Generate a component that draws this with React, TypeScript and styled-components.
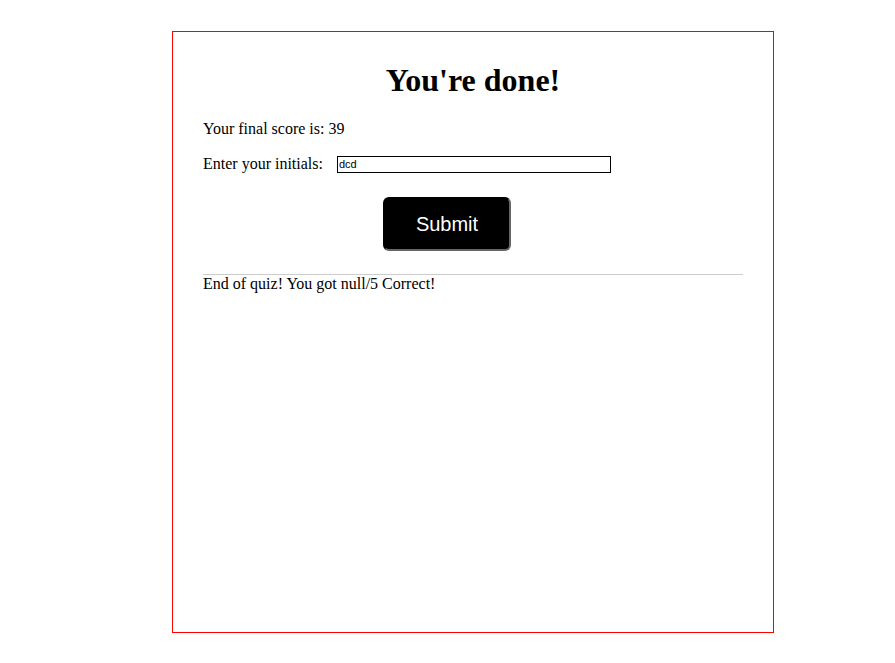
import React from "react";
import styled, { createGlobalStyle } from "styled-components";

const Global = createGlobalStyle`
  body {
    margin: 8px;
    font-family: "Liberation Serif", "Times New Roman", serif;
    font-size: 16px;
    color: #000;
    background: #fff;
  }
`;

const Card = styled.div`
  width: 540px;
  height: 581px;
  margin: 23px 0 0 164px;
  padding: 9px 30px 10px;
  border: 1px solid red;
`;

const Title = styled.h1`
  font-size: 32px;
  font-weight: bold;
  text-align: center;
  margin: 21px 0;
`;

const Line = styled.p`
  margin: 17px 0 16px;
  display: flex;
  align-items: center;
`;

const Label = styled.label`
  margin-right: 14px;
`;

const Input = styled.input`
  box-sizing: border-box;
  width: 274px;
  height: 17px;
  border: 1px solid #000;
  padding: 0 1px;
  font-family: "Liberation Sans", Arial, sans-serif;
  font-size: 11px;
  color: #000;
  outline: none;
`;

const ButtonRow = styled.div`
  display: flex;
  padding-left: 180px;
  margin-top: 24px;
`;

const SubmitButton = styled.button`
  box-sizing: border-box;
  width: 128px;
  height: 54px;
  background: #000;
  color: #fff;
  border: 2px solid #000;
  border-right-color: #666;
  border-bottom-color: #666;
  border-radius: 6px;
  font-family: "Liberation Sans", Arial, Helvetica, sans-serif;
  font-size: 20px;
  cursor: pointer;
`;

const Rule = styled.hr`
  margin: 23px 0 0;
  border: none;
  border-top: 1px solid #ccc;
  height: 0;
`;

const Result = styled.div`
  line-height: 18px;
`;

export default function App() {
  return (
    <>
      <Global />
      <Card>
        <Title>You're done!</Title>
        <Line>Your final score is: 39</Line>
        <Line>
          <Label htmlFor="initials">Enter your initials:</Label>
          <Input id="initials" defaultValue="dcd" />
        </Line>
        <ButtonRow>
          <SubmitButton>Submit</SubmitButton>
        </ButtonRow>
        <Rule />
        <Result>End of quiz! You got null/5 Correct!</Result>
      </Card>
    </>
  );
}
